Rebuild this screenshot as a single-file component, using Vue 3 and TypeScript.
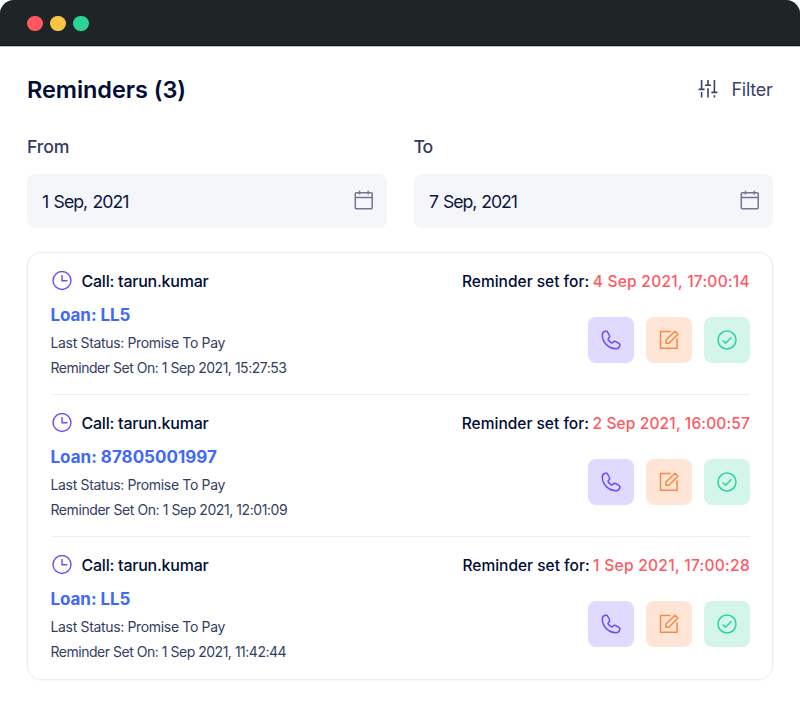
<script setup lang="ts">
interface Spaced {
  text: string
  spacing: number
}

interface Field {
  label: string
  value: string
  kind: string
}

interface Reminder {
  id: number
  user: string
  loan: string
  status: string
  setOn: Spaced
  due: Spaced
}

const fields: Field[] = [
  { label: 'From', value: '1 Sep, 2021', kind: 'from' },
  { label: 'To', value: '7 Sep, 2021', kind: 'to' },
]

const reminders: Reminder[] = [
  {
    id: 1,
    user: 'tarun.kumar',
    loan: 'LL5',
    status: 'Promise To Pay',
    setOn: { text: '1 Sep 2021, 15:27:53', spacing: -0.48 },
    due: { text: '4 Sep 2021, 17:00:14', spacing: 0.26 },
  },
  {
    id: 2,
    user: 'tarun.kumar',
    loan: '87805001997',
    status: 'Promise To Pay',
    setOn: { text: '1 Sep 2021, 12:01:09', spacing: -0.43 },
    due: { text: '2 Sep 2021, 16:00:57', spacing: 0.14 },
  },
  {
    id: 3,
    user: 'tarun.kumar',
    loan: 'LL5',
    status: 'Promise To Pay',
    setOn: { text: '1 Sep 2021, 11:42:44', spacing: -0.48 },
    due: { text: '1 Sep 2021, 17:00:28', spacing: 0.29 },
  },
]
</script>

<template>
  <div class="window">
    <header class="bar">
      <span class="dot red"></span>
      <span class="dot yellow"></span>
      <span class="dot green"></span>
    </header>
    <main class="content">
      <div class="heading">
        <h1 class="title">Reminders ({{ reminders.length }})</h1>
        <div class="filter">
          <svg class="filter-icon" width="20" height="20" viewBox="0 0 20 20" fill="none" stroke="#3a4268" stroke-width="1.6">
            <path d="M3.600 1v9M3.600 13V18.500M.6 10.400h6M10 1v5.200M10 9.200v9.300M7 6.200h6M16.400 1v12.200M16.400 16.200v2.300M13.400 13.400h6" />
          </svg>
          <span class="filter-text">Filter</span>
        </div>
      </div>

      <div class="fields">
        <div v-for="f in fields" :key="f.label" class="field">
          <label :class="['label', f.kind]">{{ f.label }}</label>
          <div class="input">
            <span :class="['value', f.kind]">{{ f.value }}</span>
            <svg width="20" height="20" viewBox="0 0 20 20" fill="none" stroke="#707696" stroke-width="1.5">
              <rect x="1.300" y="2.800" width="16.900" height="16" rx="1" />
              <path d="M1.300 7.500h16.900M5.500 .8v3.600M14.200 .8v3.600" />
            </svg>
          </div>
        </div>
      </div>

      <section class="card">
        <article v-for="r in reminders" :key="r.id" class="row">
          <div class="info">
            <div class="call">
              <svg width="22" height="20" viewBox="0 0 22 20" fill="none" stroke="#6a4dfa" stroke-width="1.4">
                <circle cx="11" cy="9.500" r="9" />
                <path d="M11 4v5.700h5.400" />
              </svg>
              <span class="call-text">Call: {{ r.user }}</span>
            </div>
            <div :class="['loan', { short: r.loan.length < 5 }]">Loan: {{ r.loan }}</div>
            <div class="status">Last Status: {{ r.status }}</div>
            <div class="set-on" :style="{ letterSpacing: r.setOn.spacing + 'px' }">Reminder Set On: {{ r.setOn.text }}</div>
          </div>
          <div class="side">
            <div class="due">
              <span class="due-label">Reminder set for:</span>
              <span class="due-date" :style="{ letterSpacing: r.due.spacing + 'px' }">{{ r.due.text }}</span>
            </div>
            <div class="actions">
              <button class="action phone" aria-label="Call">
                <svg width="20" height="20" viewBox="0 0 20 20" fill="none" stroke="#6a4dfa" stroke-width="1.500" stroke-linejoin="round">
                  <path d="M4.300 1.200C2.500 1.600 1.300 3 1.300 5C1.500 12.600 7.400 18.500 15 18.700C16.600 18.700 18.100 17.600 18.700 15.900C19.200 14.600 18.900 13.900 17.900 13.300L14.500 11.500C13.700 11.100 13 11.200 12.300 11.800L11.500 12.600C11 13.100 10.500 13.100 10 12.700C8.900 11.900 8 11 7.300 10C6.900 9.500 6.900 9 7.400 8.500L8.100 7.700C8.700 7 8.800 6.300 8.400 5.500L6.600 2.200C6.100 1.200 5.400 .9 4.300 1.200Z" />
                </svg>
              </button>
              <button class="action edit" aria-label="Edit">
                <svg width="20" height="20" viewBox="0 0 20 20" fill="none" stroke="#ff873d" stroke-width="1.500" stroke-linejoin="round">
                  <path d="M11.500 1.600H1.500V18.300H18.100V8.300" />
                  <path d="M6.900 13.200V10L16 1.200L18.900 4.200L9.900 13.200Z" />
                </svg>
              </button>
              <button class="action done" aria-label="Done">
                <svg width="20" height="20" viewBox="0 0 20 20" fill="none" stroke="#29d697" stroke-width="1.500">
                  <circle cx="10" cy="10" r="9" />
                  <path d="M5.600 10.500L8.700 13.200L14.400 7.200" />
                </svg>
              </button>
            </div>
          </div>
        </article>
      </section>
    </main>
  </div>
</template>

<style>
body {
  background: #fff;
}
</style>

<style scoped>
.window {
  box-sizing: border-box;
  width: 800px;
  height: 707px;
  overflow: hidden;
  border-radius: 14px;
  background: #fff;
  font-family: Inter, sans-serif;
  color: #010c36;
  white-space: nowrap;
}
.bar {
  box-sizing: border-box;
  height: 46px;
  padding: 1px 0 0 27px;
  display: flex;
  align-items: center;
  gap: 7.500px;
  background: #1f2527;
  box-shadow: inset 0 -1px #10151f, 0 .5px #80848a;
}
.dot {
  width: 15.700px;
  height: 15.700px;
  border-radius: 50%;
}
.red { background: #ff5863; }
.yellow { background: #fac544; }
.green { background: #29d697; }
.content {
  padding: 28px 27px 0;
}
.heading {
  display: flex;
  justify-content: space-between;
  align-items: center;
  height: 32px;
}
.title {
  margin: 0;
  font-size: 23.500px;
  line-height: 32px;
  font-weight: 600;
  letter-spacing: -.06px;
}
.filter {
  display: flex;
  align-items: center;
  gap: 13px;
  margin-right: .5px;
  color: #3a4268;
}
.filter-icon {
  margin-bottom: 2px;
}
.filter-text {
  font-size: 18px;
  line-height: 28px;
  letter-spacing: -.26px;
}
.fields {
  display: grid;
  grid-template-columns: 360px 359px;
  column-gap: 27px;
  padding-top: 28px;
}
.label {
  display: block;
  height: 40px;
  font-size: 17.700px;
  line-height: 25px;
  font-weight: 500;
  letter-spacing: -.15px;
  color: #323b62;
}
.label.to {
  margin-left: -.5px;
  letter-spacing: -1.200px;
}
.input {
  box-sizing: border-box;
  height: 54px;
  padding: 0 13px 0 15px;
  border-radius: 8px;
  background: #f5f6f9;
  display: flex;
  align-items: center;
  justify-content: space-between;
}
.input svg {
  margin-bottom: 2px;
}
.value {
  font-size: 17.700px;
  line-height: 24px;
  padding-top: 2px;
  color: #0d1741;
}
.value.from {
  letter-spacing: -.98px;
  word-spacing: 1.300px;
}
.value.to {
  letter-spacing: -1.050px;
  word-spacing: 1px;
}
.card {
  margin-top: 24px;
  border: 1px solid #e9ecf7;
  outline: .5px solid #f8f9fd;
  border-radius: 14px;
  padding: 0 22px 0 22.500px;
}
.row {
  box-sizing: border-box;
  height: 142px;
  padding-top: 18px;
  display: flex;
  justify-content: space-between;
  border-bottom: 1px solid #edeff5;
}
.row:last-child {
  border-bottom: 0;
}
.call {
  display: flex;
  align-items: center;
  gap: 9px;
  height: 20px;
}
.call-text {
  font-size: 16px;
  line-height: 20px;
  font-weight: 500;
  letter-spacing: -.235px;
}
.loan {
  margin-top: 12.500px;
  font-size: 17px;
  line-height: 22px;
  font-weight: 700;
  color: #4169f7;
}
.loan.short {
  letter-spacing: -.07px;
}
.status,
.set-on {
  font-size: 14px;
  line-height: 18px;
  color: #333d63;
}
.status {
  margin-top: 8.500px;
  letter-spacing: -.338px;
}
.set-on {
  margin-top: 7px;
}
.side {
  display: flex;
  flex-direction: column;
  align-items: flex-end;
}
.due {
  display: flex;
  gap: 3.500px;
  height: 20px;
  padding-top: 1px;
  font-size: 15.500px;
  line-height: 20px;
  font-weight: 500;
}
.due-date {
  color: #ff5863;
}
.actions {
  display: flex;
  gap: 12px;
  margin-top: 25px;
}
.action {
  width: 46px;
  height: 46px;
  padding: 0;
  border: 0;
  border-radius: 8px;
  display: flex;
  align-items: center;
  justify-content: center;
}
.phone { background: #dfdafe; }
.edit { background: #ffe5d6; }
.done { background: #d4f6ea; }
</style>
